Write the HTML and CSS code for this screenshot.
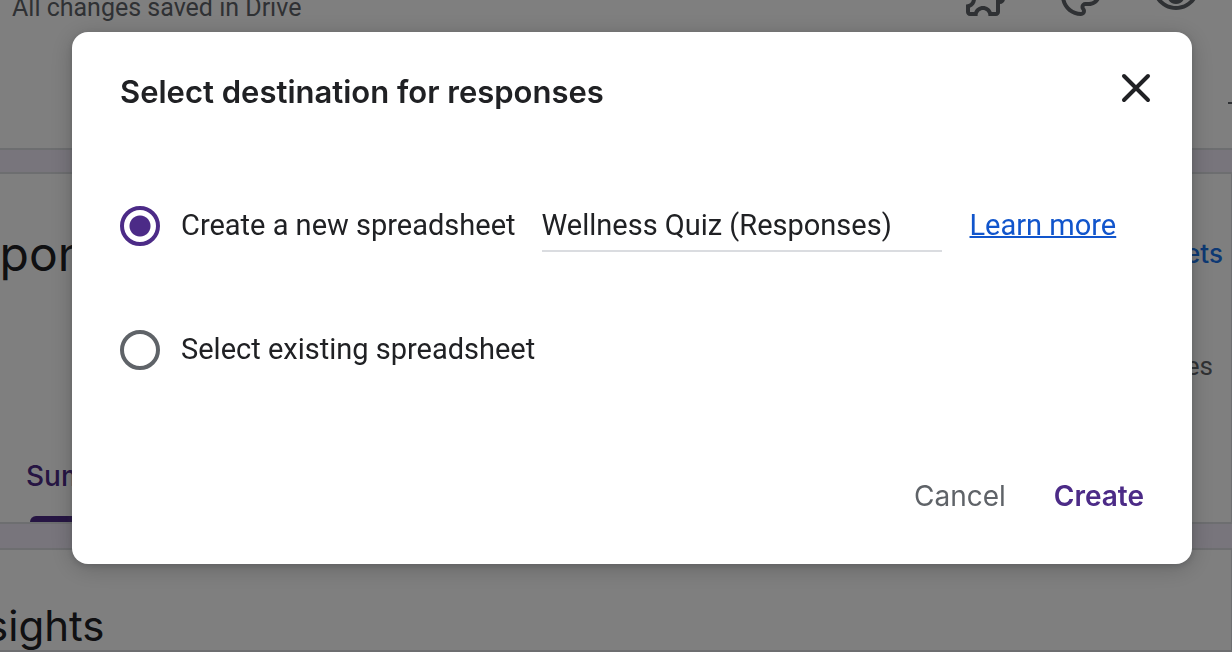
FILE: index.html
```
<!DOCTYPE html>
<html lang="en">
<head>
<meta charset="utf-8">
<title>Select destination for responses</title>
<link rel="stylesheet" href="styles.css">
</head>
<body>
<div class="page">
  <header class="topbar">
    <div class="toolbar">
      <p class="save-state">All changes saved in Drive</p>
      <div class="tools">
        <svg class="tool-icon" viewBox="0 0 24 24" aria-hidden="true"><path d="M10.5 4.5c.28 0 .5.22.5.5v2h6v6h2c.28 0 .5.22.5.5s-.22.5-.5.5h-2v6h-2.12c-.68-1.75-2.39-3-4.38-3s-3.7 1.25-4.38 3H4v-2.12c1.75-.68 3-2.39 3-4.38 0-1.99-1.24-3.7-2.99-4.38L4 7h6V5c0-.28.22-.5.5-.5m0-2C9.12 2.5 8 3.62 8 5H4c-1.1 0-1.99.9-1.99 2v3.8h.29c1.49 0 2.7 1.21 2.7 2.7s-1.21 2.7-2.7 2.7H2V20c0 1.1.9 2 2 2h3.8v-.3c0-1.49 1.21-2.7 2.7-2.7s2.7 1.21 2.7 2.7v.3H17c1.1 0 2-.9 2-2v-4c1.38 0 2.5-1.12 2.5-2.5S20.38 11 19 11V7c0-1.1-.9-2-2-2h-4c0-1.38-1.12-2.5-2.5-2.5z"/></svg>
        <svg class="tool-icon" viewBox="0 0 24 24" aria-hidden="true"><path d="M12 22C6.49 22 2 17.51 2 12S6.49 2 12 2s10 4.04 10 9c0 3.31-2.69 6-6 6h-1.77c-.28 0-.5.22-.5.5 0 .12.05.23.13.33.41.47.64 1.06.64 1.67A2.5 2.5 0 0 1 12 22zm0-18c-4.41 0-8 3.59-8 8s3.59 8 8 8c.28 0 .5-.22.5-.5a.54.54 0 0 0-.14-.35c-.41-.46-.63-1.05-.63-1.65a2.5 2.5 0 0 1 2.5-2.5H16c2.21 0 4-1.79 4-4 0-3.86-3.59-7-8-7z"/></svg>
        <svg class="tool-icon" viewBox="0 0 24 24" aria-hidden="true"><path d="M12 6c3.79 0 7.17 2.13 8.82 5.5C19.17 14.87 15.79 17 12 17s-7.17-2.13-8.82-5.5C4.83 8.13 8.21 6 12 6m0-2C7 4 2.73 7.11 1 11.5 2.73 15.89 7 19 12 19s9.27-3.11 11-7.5C21.27 7.11 17 4 12 4zm0 5a2.5 2.5 0 0 1 0 5 2.5 2.5 0 0 1 0-5m0-2c-2.48 0-4.5 2.02-4.5 4.5S9.52 16 12 16s4.5-2.02 4.5-4.5S14.48 7 12 7z"/></svg>
      </div>
    </div>
    <div class="tick"></div>
  </header>
  <section class="card summary">
    <div class="summary-head">
      <h2 class="card-title responses-title">Responses</h2>
      <span class="sheets-link">Link to Sheets</span>
    </div>
    <p class="accepting">Accepting responses</p>
    <div class="tabs"><span class="tab">Summary</span></div>
  </section>
  <section class="card insights">
    <h2 class="card-title insights-title">Insights</h2>
  </section>
</div>

<div class="scrim">
  <form class="dialog" role="dialog" aria-modal="true" aria-labelledby="dialog-title">
    <div class="dialog-head">
      <h1 class="dialog-title" id="dialog-title">Select destination for responses</h1>
      <button class="close" type="button" aria-label="Close">
        <svg class="close-icon" viewBox="0 0 48 48" aria-hidden="true"><path d="M12 12 36 36M36 12 12 36"/></svg>
      </button>
    </div>
    <div class="options">
      <div class="option">
        <input class="radio" type="radio" name="destination" id="new-sheet" checked>
        <label class="option-label" for="new-sheet">Create a new spreadsheet</label>
        <input class="sheet-name" type="text" aria-label="Spreadsheet name" value="Wellness Quiz (Responses)">
        <a class="learn" href="#">Learn more</a>
      </div>
      <div class="option">
        <input class="radio" type="radio" name="destination" id="existing-sheet">
        <label class="option-label" for="existing-sheet">Select existing spreadsheet</label>
      </div>
    </div>
    <div class="actions">
      <button class="action" type="button">Cancel</button>
      <button class="action primary" type="submit">Create</button>
    </div>
  </form>
</div>
</body>
</html>
```
FILE: styles.css
```
* {
  box-sizing: border-box;
}

body {
  margin: 0;
  font-family: Roboto, "Liberation Sans", sans-serif;
  color: #202124;
  background: #f0ebf8;
}

h1, h2, p {
  margin: 0;
}

.page {
  height: 100vh;
  overflow: hidden;
}

.topbar {
  display: flex;
  flex-direction: column;
  background: #fff;
  border-bottom: 2px solid #dadce0;
  padding-bottom: 44px;
}

.toolbar {
  display: flex;
  justify-content: space-between;
  align-items: flex-end;
  margin-top: -28px;
  padding: 0 32px 0 12px;
}

.save-state {
  font-size: 25px;
  line-height: 24px;
  color: #5f6368;
}

.tools {
  display: flex;
  gap: 47px;
}

.tool-icon {
  width: 48px;
  height: 48px;
  fill: #5f6368;
}

.tick {
  align-self: flex-end;
  width: 4px;
  height: 2px;
  margin-top: 82px;
  background: #5f6368;
}

.card {
  background: #fff;
  border: 2px solid #dadce0;
  border-width: 2px 1px 2px 0;
}

.summary {
  margin-top: 22px;
}

.summary-head {
  display: flex;
  justify-content: space-between;
  align-items: center;
  padding: 52px 8px 0 0;
}

.card-title {
  font: 400 48px/56px Inter, Roboto, sans-serif;
}

.responses-title {
  margin-left: -84px;
}

.sheets-link {
  font: 500 26px/32px Inter, Roboto, sans-serif;
  color: #1a73e8;
}

.accepting {
  margin-top: 68px;
  padding-right: 18px;
  font-size: 26px;
  line-height: 32px;
  text-align: right;
  color: #5f6368;
}

.tabs {
  display: flex;
  margin-top: 74px;
  padding-left: 26px;
}

.tab {
  font: 500 28px/40px Inter, Roboto, sans-serif;
  color: #4c2b87;
}

.tab::after {
  content: "";
  display: block;
  height: 6px;
  margin: 20px 4px 0;
  border-radius: 6px 6px 0 0;
  background: #4c2b87;
}

.insights {
  margin-top: 24px;
  padding: 52px 0 0;
}

.insights-title {
  font-size: 42px;
  line-height: 48px;
  margin-left: -50px;
}

.scrim {
  position: fixed;
  inset: 0;
  display: flex;
  align-items: flex-start;
  padding: 32px 40px 88px 72px;
  background: rgba(0, 0, 0, 0.5);
}

.dialog {
  flex: 1;
  padding: 32px;
  border-radius: 16px;
  background: #fff;
  box-shadow: 0 2px 6px rgba(60, 64, 67, 0.3), 0 4px 24px rgba(0, 0, 0, 0.2);
}

.dialog-head {
  display: flex;
  justify-content: space-between;
  align-items: flex-end;
  padding-left: 16px;
}

.dialog-title {
  font: 600 31px/40px Inter, Roboto, sans-serif;
}

.close {
  display: flex;
  padding: 0;
  border: 0;
  background: none;
}

.close-icon {
  width: 48px;
  height: 48px;
  fill: none;
  stroke: #202124;
  stroke-width: 4;
  stroke-linecap: round;
}

.options {
  display: grid;
  gap: 44px;
  padding: 74px 16px 70px;
}

.option {
  display: flex;
  align-items: center;
  min-height: 80px;
  font-size: 29px;
  line-height: 40px;
}

.radio {
  appearance: none;
  flex: none;
  width: 40px;
  height: 40px;
  margin: 0 21px 0 0;
  border: 4px solid #5f6368;
  border-radius: 50%;
}

.radio:checked {
  border-color: #4c2b87;
  background: radial-gradient(circle, #4c2b87 10px, transparent 11px);
}

.sheet-name {
  flex: 0 1 400px;
  min-width: 0;
  height: 52px;
  margin: 0 28px 0 26px;
  padding: 0;
  border: 0;
  border-bottom: 2px solid #dadce0;
  font: inherit;
  color: inherit;
  background: none;
  outline: 0;
}

.learn {
  color: #1155cc;
  text-decoration-thickness: 2px;
  white-space: nowrap;
}

.option-label,
.learn {
  padding-bottom: 2px;
}

.option-label {
  white-space: nowrap;
}

.actions {
  display: flex;
  justify-content: flex-end;
}

.action {
  padding: 16px;
  border: 0;
  font: 400 28px/40px Inter, Roboto, sans-serif;
  color: #5f6368;
  background: none;
}

.primary {
  margin-left: 16px;
  font-weight: 600;
  color: #4c2b87;
}
```
